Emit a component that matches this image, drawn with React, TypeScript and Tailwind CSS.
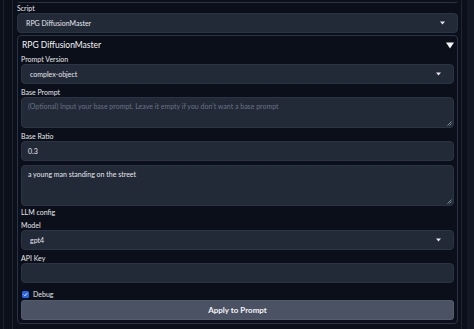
import type { ReactNode } from "react";

function Caret() {
  return (
    <svg width="5" height="4" viewBox="0 0 5 4" className="shrink-0">
      <path d="M0 0.5 H5 L2.5 3.5 Z" fill="#e5e7eb" />
    </svg>
  );
}

function ResizeHandle() {
  return (
    <svg width="5" height="5" viewBox="0 0 5 5" className="absolute bottom-[1px] right-[1px]">
      <path d="M4.5 0.5 L0.5 4.5 M4.5 2.5 L2.5 4.5" stroke="#9ca3af" strokeWidth="0.8" />
    </svg>
  );
}

function Label({ children }: { children: ReactNode }) {
  return <div className="h-[9px] text-[7px] leading-[9px] text-gray-200">{children}</div>;
}

function Select({ value }: { value: string }) {
  return (
    <div className="flex h-[20px] items-center justify-between rounded-[4px] border border-[#2b3444] bg-[#222a38] pl-[8px] pr-[12px] text-[7px] text-gray-200">
      <span>{value}</span>
      <Caret />
    </div>
  );
}

function Input({ value }: { value?: string }) {
  return (
    <div className="flex h-[20px] items-center rounded-[4px] border border-[#2b3444] bg-[#222a38] px-[6px] text-[7px] text-gray-200">
      {value}
    </div>
  );
}

function TextArea({ text, h, muted = false }: { text: string; h: string; muted?: boolean }) {
  return (
    <div
      className={`relative rounded-[4px] border border-[#2b3444] bg-[#222a38] px-[6px] pt-[4px] text-[7px] leading-[9px] ${h} ${
        muted ? "text-gray-500" : "text-gray-200"
      }`}
    >
      {text}
      <ResizeHandle />
    </div>
  );
}

export default function App() {
  return (
    <div
      className="h-[329px] w-[474px] overflow-hidden bg-[#0b0f19] pl-[3px]"
      style={{ fontFamily: "Lato, 'Noto Sans', sans-serif" }}
    >
      <div className="flex h-full">
        <div className="h-full w-[464px] border-l border-[#1c2230] pl-[8px]">
          <div className="h-full w-[450px] border-x border-[#1f2633] pl-[4px] pr-[3px]">
            <div className="h-[3px] rounded-b-[4px] border-b border-[#2b3444]" />
            <div className="mt-[1px]">
              <Label>Script</Label>
            </div>
            <Select value="RPG DiffusionMaster" />

            <div className="mt-[2px] h-[289px] rounded-[4px] border border-[#2b3444] px-[3px]">
              <div className="flex h-[19px] items-center justify-between pl-[1px] text-[8.5px] text-gray-100">
                <span>RPG DiffusionMaster</span>
                <svg width="8" height="7" viewBox="0 0 8 7">
                  <path d="M0 0.5 H8 L4 6.5 Z" fill="#f3f4f6" />
                </svg>
              </div>

              <Label>Prompt Version</Label>
              <Select value="complex-object" />

              <div className="mt-[4px]">
                <Label>Base Prompt</Label>
              </div>
              <TextArea
                h="h-[31px]"
                muted
                text="(Optional) Input your base prompt. Leave it empty if you don't want a base prompt"
              />

              <div className="mt-[4px]">
                <Label>Base Ratio</Label>
              </div>
              <Input value="0.3" />

              <div className="mt-[4px]">
                <TextArea h="h-[41px]" text="a young man standing on the street" />
              </div>

              <div className="mt-[2px] h-[9px] text-[7px] leading-[9px] text-gray-200">LLM config</div>
              <div className="mt-[4px]">
                <Label>Model</Label>
              </div>
              <Select value="gpt4" />

              <div className="mt-[4px]">
                <Label>API Key</Label>
              </div>
              <Input />

              <div className="mt-[6px] flex h-[10px] items-center gap-[4px] pl-[1px]">
                <span className="flex h-[7px] w-[7px] items-center justify-center rounded-[1.5px] bg-[#2563eb]">
                  <svg width="5" height="5" viewBox="0 0 5 5">
                    <path d="M0.8 2.6 L2 3.8 L4.3 1.2" stroke="#fff" strokeWidth="0.9" fill="none" />
                  </svg>
                </span>
                <span className="text-[7px] text-gray-200">Debug</span>
              </div>

              <div className="mt-[1px] flex h-[20px] items-center justify-center rounded-[3px] border border-[#525c6d] bg-[#4a5263] text-[8px] font-bold text-gray-100">
                Apply to Prompt
              </div>
            </div>
          </div>
        </div>
        <div className="h-full flex-1 bg-[#121723]" />
      </div>
    </div>
  );
}
